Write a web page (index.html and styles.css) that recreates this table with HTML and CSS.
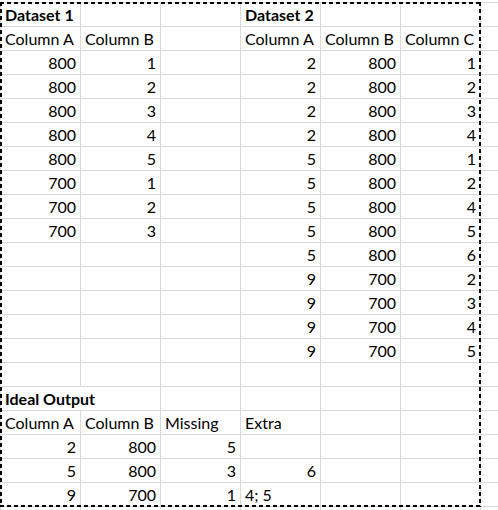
FILE: index.html
```html
<!DOCTYPE html>
<html>
<head>
<meta charset="utf-8">
<link rel="stylesheet" href="styles.css">
</head>
<body>
<div class="sheet">
  <div class="c b">Dataset 1</div><div class="c"></div><div class="c"></div><div class="c b">Dataset 2</div><div class="c"></div><div class="c"></div><div class="c"></div>
  <div class="c">Column A</div><div class="c">Column B</div><div class="c"></div><div class="c">Column A</div><div class="c">Column B</div><div class="c">Column C</div><div class="c"></div>
  <div class="c n">800</div><div class="c n">1</div><div class="c"></div><div class="c n">2</div><div class="c n">800</div><div class="c n">1</div><div class="c"></div>
  <div class="c n">800</div><div class="c n">2</div><div class="c"></div><div class="c n">2</div><div class="c n">800</div><div class="c n">2</div><div class="c"></div>
  <div class="c n">800</div><div class="c n">3</div><div class="c"></div><div class="c n">2</div><div class="c n">800</div><div class="c n">3</div><div class="c"></div>
  <div class="c n">800</div><div class="c n">4</div><div class="c"></div><div class="c n">2</div><div class="c n">800</div><div class="c n">4</div><div class="c"></div>
  <div class="c n">800</div><div class="c n">5</div><div class="c"></div><div class="c n">5</div><div class="c n">800</div><div class="c n">1</div><div class="c"></div>
  <div class="c n">700</div><div class="c n">1</div><div class="c"></div><div class="c n">5</div><div class="c n">800</div><div class="c n">2</div><div class="c"></div>
  <div class="c n">700</div><div class="c n">2</div><div class="c"></div><div class="c n">5</div><div class="c n">800</div><div class="c n">4</div><div class="c"></div>
  <div class="c n">700</div><div class="c n">3</div><div class="c"></div><div class="c n">5</div><div class="c n">800</div><div class="c n">5</div><div class="c"></div>
  <div class="c"></div><div class="c"></div><div class="c"></div><div class="c n">5</div><div class="c n">800</div><div class="c n">6</div><div class="c"></div>
  <div class="c"></div><div class="c"></div><div class="c"></div><div class="c n">9</div><div class="c n">700</div><div class="c n">2</div><div class="c"></div>
  <div class="c"></div><div class="c"></div><div class="c"></div><div class="c n">9</div><div class="c n">700</div><div class="c n">3</div><div class="c"></div>
  <div class="c"></div><div class="c"></div><div class="c"></div><div class="c n">9</div><div class="c n">700</div><div class="c n">4</div><div class="c"></div>
  <div class="c"></div><div class="c"></div><div class="c"></div><div class="c n">9</div><div class="c n">700</div><div class="c n">5</div><div class="c"></div>
  <div class="c"></div><div class="c"></div><div class="c"></div><div class="c"></div><div class="c"></div><div class="c"></div><div class="c"></div>
  <div class="c b">Ideal Output</div><div class="c spill"></div><div class="c"></div><div class="c"></div><div class="c"></div><div class="c"></div><div class="c"></div>
  <div class="c">Column A</div><div class="c">Column B</div><div class="c">Missing</div><div class="c">Extra</div><div class="c"></div><div class="c"></div><div class="c"></div>
  <div class="c n">2</div><div class="c n">800</div><div class="c n">5</div><div class="c"></div><div class="c"></div><div class="c"></div><div class="c"></div>
  <div class="c n">5</div><div class="c n">800</div><div class="c n">3</div><div class="c n">6</div><div class="c"></div><div class="c"></div><div class="c"></div>
  <div class="c n">9</div><div class="c n">700</div><div class="c n">1</div><div class="c">4; 5</div><div class="c"></div><div class="c"></div><div class="c"></div>
  <div class="c"></div><div class="c"></div><div class="c"></div><div class="c"></div><div class="c"></div><div class="c"></div><div class="c"></div>
</div>
</body>
</html>
```
FILE: styles.css
```css
html, body {
  margin: 0;
  padding: 0;
  background: #fff;
  overflow: hidden;
}

.sheet {
  position: relative;
  display: grid;
  grid-template-columns: repeat(6, 80px) 18px;
  grid-auto-rows: 24px;
  margin-top: 2px;
  width: 498px;
  font-family: Lato, "Liberation Sans", sans-serif;
  font-size: 16px;
  color: #000;
}

.sheet::after {
  content: "";
  position: absolute;
  left: 0;
  top: 0;
  width: 481px;
  height: 505px;
  pointer-events: none;
  background:
    repeating-linear-gradient(90deg, #000 0 4px, transparent 4px 7px) left top / 100% 2px no-repeat,
    repeating-linear-gradient(90deg, #000 0 4px, transparent 4px 7px) left bottom / 100% 2px no-repeat,
    repeating-linear-gradient(180deg, #000 0 4px, transparent 4px 7px) left top / 2px 100% no-repeat,
    repeating-linear-gradient(180deg, #000 0 4px, transparent 4px 7px) right top / 2px 100% no-repeat;
}

.c {
  box-sizing: border-box;
  border-left: 1px solid #d9d9d9;
  border-top: 1px solid #d9d9d9;
  padding: 0 4px 3px 4px;
  display: flex;
  align-items: flex-end;
  white-space: nowrap;
  line-height: 16px;
  min-width: 0;
}

.n {
  justify-content: flex-end;
}

.b {
  font-weight: 700;
}

.spill {
  border-left-color: transparent;
}
```
